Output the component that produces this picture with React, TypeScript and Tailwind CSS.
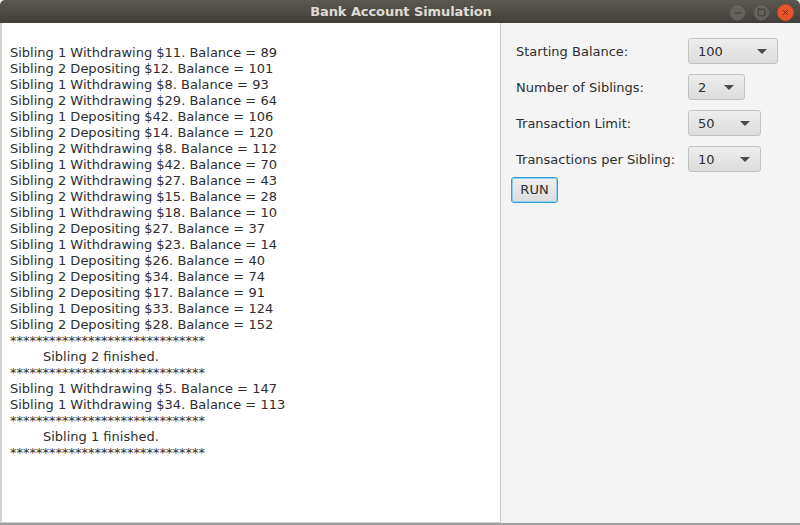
import React from 'react';
import { X, Minus, Square } from 'lucide-react';

const logLines = [
  'Sibling 1 Withdrawing $11. Balance = 89',
  'Sibling 2 Depositing $12. Balance = 101',
  'Sibling 1 Withdrawing $8. Balance = 93',
  'Sibling 2 Withdrawing $29. Balance = 64',
  'Sibling 1 Depositing $42. Balance = 106',
  'Sibling 2 Depositing $14. Balance = 120',
  'Sibling 2 Withdrawing $8. Balance = 112',
  'Sibling 1 Withdrawing $42. Balance = 70',
  'Sibling 2 Withdrawing $27. Balance = 43',
  'Sibling 2 Withdrawing $15. Balance = 28',
  'Sibling 1 Withdrawing $18. Balance = 10',
  'Sibling 2 Depositing $27. Balance = 37',
  'Sibling 1 Withdrawing $23. Balance = 14',
  'Sibling 1 Depositing $26. Balance = 40',
  'Sibling 2 Depositing $34. Balance = 74',
  'Sibling 2 Depositing $17. Balance = 91',
  'Sibling 1 Depositing $33. Balance = 124',
  'Sibling 2 Depositing $28. Balance = 152',
  '******************************',
  '\tSibling 2 finished.',
  '******************************',
  'Sibling 1 Withdrawing $5. Balance = 147',
  'Sibling 1 Withdrawing $34. Balance = 113',
  '******************************',
  '\tSibling 1 finished.',
  '******************************',
];

const settings = [
  { label: 'Starting Balance:', value: '100', width: 'w-[90px]' },
  { label: 'Number of Siblings:', value: '2', width: 'w-[57px]' },
  { label: 'Transaction Limit:', value: '50', width: 'w-[73px]' },
  { label: 'Transactions per Sibling:', value: '10', width: 'w-[73px]' },
];

const WindowButton = ({ children, className }: { children: React.ReactNode; className: string }) => (
  <div className={`w-[17px] h-[17px] rounded-full flex items-center justify-center ${className}`}>{children}</div>
);

export default function App() {
  return (
    <div className="w-[800px] h-[525px] flex flex-col overflow-hidden bg-[#f4f4f4] font-['DejaVu_Sans',sans-serif] text-[13px] text-[#2e2e2e]">
      <header className="h-[23px] shrink-0 rounded-t-[5px] bg-gradient-to-b from-[#5a5850] to-[#413f39] flex items-center relative">
        <h1 className="flex-1 text-center text-[13px] font-bold tracking-[-0.08px] text-[#dfdbd2] leading-[23px] pl-[2px]">Bank Account Simulation</h1>
        <div className="absolute right-[6px] top-[4px] flex gap-[7px]">
          <WindowButton className="bg-[#64635d] border border-[#4f4e48]">
            <Minus size={10} strokeWidth={1.75} className="text-[#2a2926]" />
          </WindowButton>
          <WindowButton className="bg-[#64635d] border border-[#4f4e48]">
            <Square size={9} strokeWidth={1.75} className="text-[#2a2926]" />
          </WindowButton>
          <WindowButton className="bg-[#e9552a] border border-[#cf4a22]">
            <X size={9} strokeWidth={2} className="text-[#4a2113]" />
          </WindowButton>
        </div>
      </header>
      <div className="flex h-[500px] shrink-0">
        <main className="w-[501px] shrink-0 bg-white border-l-2 border-l-[#d2d2d2] border-r border-r-[#c8c8c8] border-b border-b-[#cfcfcf] pl-[8px] pt-[22px]">
          {logLines.map((line, i) => (
            <div key={i} className="h-4 leading-4 whitespace-pre">
              {line.startsWith('\t') ? <span className="pl-[33px]">{line.slice(1)}</span> : line}
            </div>
          ))}
        </main>
        <aside className="flex-1 pl-[10px] pt-[15px]">
          <div className="flex flex-col gap-[10px] pl-[5px]">
            {settings.map((s) => (
              <div key={s.label} className="flex items-center h-[26px]">
                <span className="w-[172px] pt-[2px]">{s.label}</span>
                <div className={`${s.width} h-[26px] rounded-[3px] border border-[#c2c2c2] bg-gradient-to-b from-[#eeeeee] to-[#dcdcdc] flex items-center justify-between pl-[9px] pr-[10px]`}>
                  <span className="pt-[2px]">{s.value}</span>
                  <svg width="10" height="5" viewBox="0 0 10 5"><path d="M0 0 H10 L5 5 Z" fill="#4a4a4a" /></svg>
                </div>
              </div>
            ))}
          </div>
          <button className="mt-[5px] w-[47px] h-[26px] rounded-[3px] border border-[#2f9fd6] bg-gradient-to-b from-[#eeeeee] to-[#dcdcdc] text-[13px] text-[#2e2e2e] ring-1 ring-inset ring-[#8fd0f0]">RUN</button>
        </aside>
      </div>
      <div className="h-[2px] bg-[#a0a0a0]" />
    </div>
  );
}
